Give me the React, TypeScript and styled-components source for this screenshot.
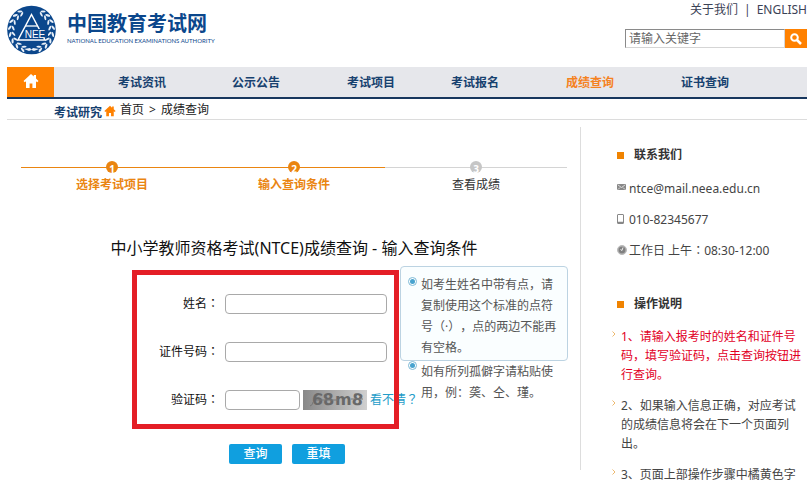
import React from "react";
import styled, { createGlobalStyle } from "styled-components";

const navy = "#17416f";
const orange = "#ff8100";
const stepOrange = "#ea8511";
const sky = "#109fdf";

const GlobalStyle = createGlobalStyle`
  *, *::before, *::after { box-sizing: border-box; }
  body {
    margin: 0;
    background: #fff;
    color: #333;
    font: 12px/20px "Noto Sans", "Noto Sans CJK SC", sans-serif;
    text-spacing-trim: space-all;
  }
  h1, h2, p, ul, ol { margin: 0; padding: 0; }
  ul, ol { list-style: none; }
  a { color: inherit; text-decoration: none; }
  input, button { font: inherit; }
`;

const Page = styled.div`
  padding: 0 2px 0 7px;
  overflow: hidden;
`;

const Header = styled.header`
  display: flex;
  justify-content: space-between;
  height: 67px;
`;

const Brand = styled.a`
  display: flex;
  gap: 11px;
  padding-top: 5px;
  svg { display: block; flex: none; }
`;

const BrandText = styled.div`
  padding-top: 6px;
  color: #0b478c;
  white-space: nowrap;
`;

const BrandName = styled.div`
  font-size: 20px;
  line-height: 26px;
  font-weight: 700;
`;

const BrandSub = styled.div`
  font-family: Lato, sans-serif;
  font-size: 6px;
  line-height: 8px;
`;

const HeaderTools = styled.div`
  display: flex;
  flex-direction: column;
  align-items: flex-end;
  gap: 9px;
`;

const TopLinks = styled.nav`
  display: flex;
  gap: 6px;
  color: #3b4256;
`;

const Search = styled.form`
  display: flex;
  height: 19px;
`;

const SearchInput = styled.input`
  width: 160px;
  padding: 0 3px;
  border: 1px solid #d5d5d5;
  border-top-color: #8a8a8a;
  border-left-color: #8a8a8a;
  outline: none;
  &::placeholder { color: #666; opacity: 1; }
`;

const SearchButton = styled.button`
  display: grid;
  place-items: center;
  width: 22px;
  padding: 0;
  border: 0;
  background: ${orange};
`;

const NavBar = styled.nav`
  display: flex;
  height: 32px;
  background: #e6e7eb;
  border-bottom: 2px solid #17375e;
`;

const HomeLink = styled.a`
  display: grid;
  place-items: center;
  width: 47px;
  padding-bottom: 3px;
  background: ${orange};
`;

const NavItems = styled.div`
  flex: 1;
  display: grid;
  grid-template-columns: 114fr 115fr 104fr 115fr 115fr 126fr;
  padding-left: 64px;
`;

const NavLink = styled.a<{ $active?: boolean }>`
  color: ${(p) => (p.$active ? "#f5821f" : navy)};
  font-weight: 700;
  line-height: 31px;
  white-space: nowrap;
`;

const NavExtra = styled(NavLink)`
  line-height: 27px;
`;

const Crumbs = styled.nav`
  display: flex;
  height: 21px;
  padding-left: 47px;
  border-bottom: 1px solid #dcdcdc;
  color: #222;
  svg { margin: 6px 4px 0 2px; flex: none; }
`;

const CrumbTrail = styled.span`
  display: flex;
  gap: 5px;
  line-height: 22px;
`;

const Main = styled.main`
  display: grid;
  grid-template-columns: 574fr 226fr;
  align-items: start;
  padding-top: 7px;
`;

const QueryPanel = styled.section`
  min-width: 0;
  padding: 34px 13px 6px 14px;
  border-right: 1px solid #ddd;
`;

const Steps = styled.ol`
  display: grid;
  grid-template-columns: repeat(3, 1fr);
`;

const Step = styled.li<{ $on: boolean }>`
  display: grid;
  justify-items: center;
  color: ${(p) => (p.$on ? stepOrange : "#333")};
  font-weight: ${(p) => (p.$on ? 700 : 400)};
  &::before {
    content: "";
    grid-area: 1 / 1;
    width: 100%;
    height: 1px;
    margin-top: 6px;
    background: ${(p) => (p.$on ? stepOrange : "#d4d4d4")};
  }
`;

const StepDot = styled.span<{ $on: boolean }>`
  grid-area: 1 / 1;
  width: 12px;
  height: 12px;
  margin-bottom: 2px;
  border-radius: 50%;
  background: ${(p) => (p.$on ? stepOrange : "#c6c6c6")};
  color: #fff;
  font-size: 10px;
  font-weight: 700;
  line-height: 16px;
  text-align: center;
`;

const Title = styled.h1`
  margin-top: 40px;
  color: #111;
  font-size: 16px;
  font-weight: 400;
  line-height: 26px;
  text-align: center;
  white-space: nowrap;
`;

const QueryBody = styled.div`
  display: grid;
  grid-template-columns: 379px 168px;
  align-items: start;
  padding-top: 5px;
`;

const Form = styled.form`
  position: relative;
  display: grid;
  gap: 28px;
  padding-top: 28px;
`;

const Field = styled.div`
  display: grid;
  grid-template-columns: 198px auto 1fr;
  align-items: center;
  height: 20px;
`;

const Label = styled.label`
  color: #111;
  text-align: right;
`;

const Wide = styled.span`
  font-family: "Noto Sans CJK JP", sans-serif;
  line-height: 1;
`;

const TextInput = styled.input<{ $short?: boolean }>`
  width: ${(p) => (p.$short ? 75 : 162)}px;
  height: 20px;
  margin-left: 6px;
  padding: 0 4px;
  border: 1px solid #a9a9a9;
  border-radius: 4px;
  outline: none;
`;

const Captcha = styled.div`
  display: flex;
  gap: 3px;
  padding-left: 3px;
  color: #239cc8;
  white-space: nowrap;
  svg { display: block; flex: none; }
`;

const Highlight = styled.div`
  position: absolute;
  top: 4px;
  left: 111px;
  width: 267px;
  height: 159px;
  border: 5px solid #e41e26;
  pointer-events: none;
`;

const Actions = styled.div`
  display: flex;
  gap: 10px;
  padding: 6px 0 0 208px;
`;

const ActionButton = styled.button`
  width: 53px;
  height: 20px;
  padding: 0;
  border: 0;
  border-radius: 2px;
  background: ${sky};
  color: #fff;
  font-weight: 500;
  line-height: 20px;
`;

const Tips = styled.ul`
  color: #555;
  line-height: 21px;
`;

const Tip = styled.li<{ $boxed?: boolean }>`
  display: grid;
  grid-template-columns: 13px 1fr;
  padding: ${(p) => (p.$boxed ? "7px 5px 2px 7px" : "0 6px 0 8px")};
  border: ${(p) => (p.$boxed ? "1px solid #bcd3e2" : "0")};
  border-radius: 4px;
  background: ${(p) => (p.$boxed ? "#fafeff" : "none")};
  svg { margin-top: ${(p) => (p.$boxed ? 3 : 0)}px; }
`;

const Aside = styled.aside`
  min-width: 0;
  padding: 18px 4px 0 31px;
`;

const AsideTitle = styled.h2`
  display: flex;
  align-items: center;
  gap: 10px;
  padding-left: 5px;
  font-size: 12px;
  line-height: 20px;
  &::before {
    content: "";
    width: 7px;
    height: 7px;
    background: #f08300;
  }
`;

const Contacts = styled.ul`
  display: grid;
  gap: 11px;
  padding: 14px 0 33px 5px;
  color: #444;
`;

const Contact = styled.li`
  display: grid;
  grid-template-columns: 12px 1fr;
  white-space: nowrap;
  svg { margin-top: 4px; }
`;

const Notes = styled.ol`
  display: grid;
  gap: 12px;
  padding-top: 13px;
  line-height: 19px;
`;

const Note = styled.li<{ $alert?: boolean }>`
  display: grid;
  grid-template-columns: 9px 1fr;
  color: ${(p) => (p.$alert ? "#e2001f" : "#444")};
  svg { margin-top: 4px; }
`;

const leafAngles = [24, 42, 60, 78, 96, 114, 132, 148];

const Emblem = () => (
  <svg width="49" height="50" viewBox="0 0 49 50" aria-hidden="true">
    <circle cx="24.5" cy="25" r="24.3" fill="#0b478c" />
    <g fill="#e8eff7">
      {leafAngles.map((a) =>
        [a, -a].map((r) => (
          <g key={r} transform={`rotate(${r + 180} 24.5 25)`}>
            <ellipse cx="24.5" cy="3.2" rx="2.6" ry="1.1" transform={`rotate(${r > 0 ? 30 : -30} 24.5 3.2)`} />
            <ellipse cx="24.5" cy="6.6" rx="2.6" ry="1" transform={`rotate(${r > 0 ? -30 : 30} 24.5 6.6)`} />
          </g>
        ))
      )}
      <path d="M17 44l6-1 1.500 1.500 1.500-1.500 6 1-5 2-2.500-1-2.500 1z" />
    </g>
    <circle cx="24.500" cy="25" r="16.500" fill="#0b478c" />
    <path d="M24.500 9.500L11 35h27z" fill="none" stroke="#fff" strokeWidth="1.500" />
    <path d="M18.500 21h12" stroke="#fff" strokeWidth="1.300" />
    <path d="M18 24h23v9H15z" fill="#0b478c" />
    <text x="28" y="32.500" textAnchor="middle" fontFamily="Liberation Sans" fontSize="10" fill="#fff">NEE</text>
  </svg>
);

const House = ({ size, color }: { size: number; color: string }) => (
  <svg width={size} height={size} viewBox="0 0 16 16" fill={color} aria-hidden="true">
    <path d="M8 1L0.500 8l1.300 1.300L3 8.300V15h3.600v-4.500h2.800V15H13V8.300l1.200 1 1.300-1.300L13 5.600V2h-2.200v1.600z" />
  </svg>
);

const Bullet = () => (
  <svg width="9" height="9" viewBox="0 0 9 9" aria-hidden="true">
    <circle cx="4.500" cy="4.500" r="4" fill="#fff" stroke="#7db9d6" />
    <circle cx="4.500" cy="4.500" r="2.500" fill="#48a3cf" />
  </svg>
);

const Arrow = () => (
  <svg width="4" height="7" viewBox="0 0 4 7" fill="none" stroke="#edb96f" aria-hidden="true">
    <path d="M0.500 0.500l2.500 2.500-2.500 2.500" />
  </svg>
);

const MailIcon = () => (
  <svg width="9" height="9" viewBox="0 0 9 9" aria-hidden="true">
    <rect y="1" width="9" height="6" rx="1" fill="#888" />
    <path d="M1 2l3.500 2.500L8 2M1 6.500l2-2M8 6.500l-2-2" fill="none" stroke="#eee" strokeWidth="0.800" />
  </svg>
);

const PhoneIcon = () => (
  <svg width="8" height="11" viewBox="0 0 8 11" aria-hidden="true">
    <rect x="0.500" y="0.500" width="6" height="9" rx="0.500" fill="#fff" stroke="#888" />
    <path d="M0.500 8.500h6" stroke="#888" strokeWidth="1.500" />
  </svg>
);

const ClockIcon = () => (
  <svg width="10" height="10" viewBox="0 0 10 10" aria-hidden="true">
    <circle cx="5" cy="5" r="4.500" fill="#aaa" stroke="#bbb" />
    <circle cx="5" cy="5" r="3.300" fill="#808080" />
    <path d="M6 2.500L5 5.500 3.500 4.500" fill="none" stroke="#eee" />
  </svg>
);

const CaptchaImage = () => (
  <svg width="64" height="20" viewBox="0 0 64 20" role="img" aria-label="验证码图片">
    <defs>
      <linearGradient id="shade">
        <stop offset="0" stopColor="#888" />
        <stop offset="1" stopColor="#d0d0d0" />
      </linearGradient>
    </defs>
    <rect width="64" height="20" fill="url(#shade)" />
    <g fontFamily="DejaVu Sans" fontWeight="700" fontSize="16" fill="#686868">
      <text x="9" y="15" transform="rotate(6 15 10)">6</text>
      <text x="20" y="15" transform="rotate(-6 26 10)">8</text>
      <text x="32" y="15">m</text>
      <text x="49" y="15" transform="rotate(8 54 10)">8</text>
    </g>
    <path d="M7 16q3-1 3-4M13 10h22M48 9h12" fill="none" stroke="#777" />
  </svg>
);

const navLinks = ["考试资讯", "公示公告", "考试项目", "考试报名", "成绩查询", "证书查询"];
const steps = ["选择考试项目", "输入查询条件", "查看成绩"];
const notes = [
  "1、请输入报考时的姓名和证件号码，填写验证码，点击查询按钮进行查询。",
  "2、如果输入信息正确，对应考试的成绩信息将会在下一个页面列出。",
  "3、页面上部操作步骤中橘黄色字",
];

export default function App() {
  return (
    <Page>
      <GlobalStyle />
      <Header>
        <Brand href="#">
          <Emblem />
          <BrandText>
            <BrandName>中国教育考试网</BrandName>
            <BrandSub>NATIONAL EDUCATION EXAMINATIONS AUTHORITY</BrandSub>
          </BrandText>
        </Brand>
        <HeaderTools>
          <TopLinks>
            <a href="#about">关于我们</a>
            <span>|</span>
            <a href="#english">ENGLISH</a>
          </TopLinks>
          <Search>
            <SearchInput aria-label="关键字" placeholder="请输入关键字" />
            <SearchButton type="button" aria-label="搜索">
              <svg width="12" height="12" viewBox="0 0 12 12" fill="none" stroke="#fff" strokeWidth="2">
                <circle cx="4.500" cy="4.500" r="3.300" />
                <path d="M7 7l4 4" strokeWidth="2.500" />
              </svg>
            </SearchButton>
          </Search>
        </HeaderTools>
      </Header>
      <NavBar>
        <HomeLink href="#" aria-label="首页">
          <House size={16} color="#fff" />
        </HomeLink>
        <NavItems>
          {navLinks.map((t) => (
            <NavLink key={t} href="#" $active={t === "成绩查询"}>{t}</NavLink>
          ))}
        </NavItems>
      </NavBar>
      <Crumbs>
        <NavExtra href="#">考试研究</NavExtra>
        <House size={12} color={orange} />
        <CrumbTrail>
          <a href="#">首页</a>
          <span>&gt;</span>
          <a href="#">成绩查询</a>
        </CrumbTrail>
      </Crumbs>
      <Main>
        <QueryPanel>
          <Steps>
            {steps.map((t, i) => (
              <Step key={t} $on={i < 2}>
                <StepDot $on={i < 2}>{i + 1}</StepDot>
                <span>{t}</span>
              </Step>
            ))}
          </Steps>
          <Title>中小学教师资格考试(NTCE)成绩查询 - 输入查询条件</Title>
          <QueryBody>
            <Form>
              <Field>
                <Label htmlFor="name">姓名<Wide>：</Wide></Label>
                <TextInput id="name" />
              </Field>
              <Field>
                <Label htmlFor="idno">证件号码<Wide>：</Wide></Label>
                <TextInput id="idno" />
              </Field>
              <Field>
                <Label htmlFor="code">验证码<Wide>：</Wide></Label>
                <TextInput id="code" $short />
                <Captcha>
                  <CaptchaImage />
                  <a href="#refresh">看不清<Wide>？</Wide></a>
                </Captcha>
              </Field>
              <Actions>
                <ActionButton type="button">查询</ActionButton>
                <ActionButton type="reset">重填</ActionButton>
              </Actions>
              <Highlight />
            </Form>
            <Tips>
              <Tip $boxed>
                <Bullet />
                <p>如考生姓名中带有点，请复制使用这个标准的点符号（·），点的两边不能再有空格。</p>
              </Tip>
              <Tip>
                <Bullet />
                <p>如有所列孤僻字请粘贴使用，例：䶮、仝、瑾。</p>
              </Tip>
            </Tips>
          </QueryBody>
        </QueryPanel>
        <Aside>
          <AsideTitle>联系我们</AsideTitle>
          <Contacts>
            <Contact><MailIcon /><span>ntce@mail.neea.edu.cn</span></Contact>
            <Contact><PhoneIcon /><span>010-82345677</span></Contact>
            <Contact><ClockIcon /><span>工作日 上午<Wide>：</Wide>08:30-12:00</span></Contact>
          </Contacts>
          <AsideTitle>操作说明</AsideTitle>
          <Notes>
            {notes.map((t, i) => (
              <Note key={t} $alert={i === 0}>
                <Arrow />
                <span>{t}</span>
              </Note>
            ))}
          </Notes>
        </Aside>
      </Main>
    </Page>
  );
}
